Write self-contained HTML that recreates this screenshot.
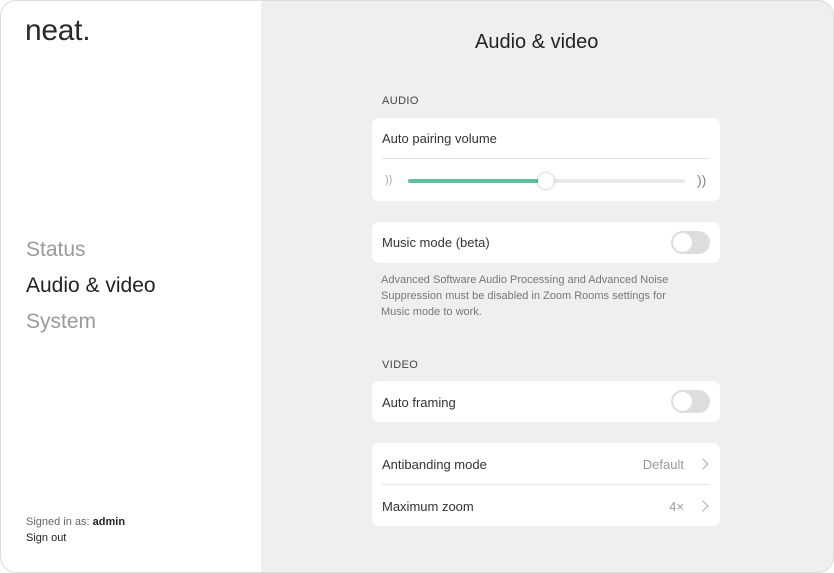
<!DOCTYPE html>
<html><head><style>
*{margin:0;padding:0;box-sizing:border-box}
body{width:834px;height:573px;background:#fff;font-family:"Liberation Sans",sans-serif;overflow:hidden;position:relative}
.frame{position:absolute;left:0;top:0;width:834px;height:573px;border-radius:16px;overflow:hidden;background:#efefef}
.bord{position:absolute;left:0;top:0;width:834px;height:573px;border:1px solid #dcdcdc;border-radius:16px;pointer-events:none}
.left{position:absolute;left:0;top:0;width:261px;height:100%;background:#fff}
.logo{position:absolute;left:25px;top:14px;font-size:30px;color:#2a2a2a;letter-spacing:-0.3px}
.nav{position:absolute;left:26px;font-size:21px;color:#9a9a9a}
.t{position:absolute;color:#333}
.card{position:absolute;left:372px;width:348px;background:#fff;border-radius:7px}
.lbl{position:absolute;left:10px;font-size:13px;color:#333}
.sec{position:absolute;left:382px;font-size:11px;color:#444;letter-spacing:.4px}
.tog{position:absolute;right:10px;width:39px;height:23px;border-radius:12px;background:#ddd}
.tog::after{content:"";position:absolute;left:2px;top:2px;width:19px;height:19px;border-radius:50%;background:#fff}
.hr{position:absolute;left:10px;right:10px;height:1px;background:#e2e2e2}
.val{position:absolute;right:36px;font-size:13px;color:#999}
.chev{position:absolute;right:13px;width:8px;height:8px;border-right:1.3px solid #aaa;border-top:1.3px solid #aaa;transform:rotate(45deg)}
</style></head><body>
<div class="frame">
<div class="left">
<div class="logo">neat.</div>
<div class="nav" style="top:238px">Status</div>
<div class="nav" style="top:274px;color:#222">Audio &amp; video</div>
<div class="nav" style="top:310px">System</div>
<div class="t" style="left:26px;top:516px;font-size:11px;color:#666">Signed in as: <b style="color:#222">admin</b></div>
<div class="t" style="left:26px;top:532px;font-size:11px;color:#222">Sign out</div>
</div>
<div class="t" style="left:475px;top:31px;font-size:20px;color:#222">Audio &amp; video</div>
<div class="sec" style="top:95px">AUDIO</div>
<div class="card" style="top:118px;height:83px">
<div class="lbl" style="top:13px">Auto pairing volume</div>
<div class="hr" style="top:40px"></div>
<div style="position:absolute;left:13px;top:56px;font-size:11px;color:#aaa">))</div>
<div style="position:absolute;left:36px;top:61px;width:277px;height:4px;border-radius:2px;background:#eaeaea"></div>
<div style="position:absolute;left:36px;top:61px;width:138px;height:4px;border-radius:2px;background:#5cc19e"></div>
<div style="position:absolute;left:166px;top:55px;width:16px;height:16px;border-radius:50%;background:#fff;box-shadow:0 0 3px rgba(0,0,0,.3)"></div>
<div style="position:absolute;left:325px;top:54px;font-size:14px;color:#888">))</div>
</div>
<div class="card" style="top:222px;height:41px">
<div class="lbl" style="top:13px">Music mode (beta)</div>
<div class="tog" style="top:9px"></div>
</div>
<div class="t" style="left:381px;top:272px;font-size:11px;line-height:16px;color:#777;width:312px">Advanced Software Audio Processing and Advanced Noise Suppression must be disabled in Zoom Rooms settings for Music mode to work.</div>
<div class="sec" style="top:359px">VIDEO</div>
<div class="card" style="top:381px;height:41px">
<div class="lbl" style="top:14px">Auto framing</div>
<div class="tog" style="top:9px"></div>
</div>
<div class="card" style="top:443px;height:83px">
<div class="lbl" style="top:14px">Antibanding mode</div>
<div class="val" style="top:14px">Default</div><div class="chev" style="top:17px"></div>
<div class="hr" style="top:41px"></div>
<div class="lbl" style="top:56px">Maximum zoom</div>
<div class="val" style="top:56px">4×</div><div class="chev" style="top:59px"></div>
</div>
</div>
<div class="bord"></div>
</body></html>
